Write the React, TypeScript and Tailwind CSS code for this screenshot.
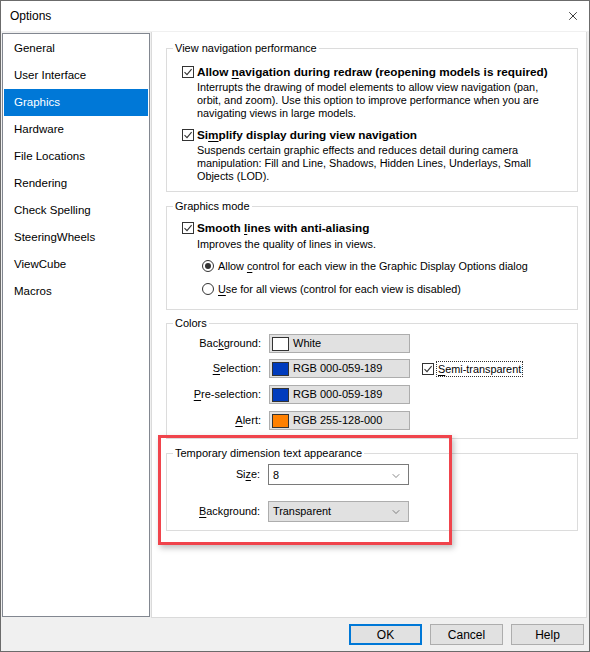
import React from 'react';
import { X, ChevronDown } from 'lucide-react';

const font = { fontFamily: '"Liberation Sans", Arial, sans-serif' };

const navItems = [
  'General',
  'User Interface',
  'Graphics',
  'Hardware',
  'File Locations',
  'Rendering',
  'Check Spelling',
  'SteeringWheels',
  'ViewCube',
  'Macros',
];

// label with an underlined access-key letter
function Mn({ pre, key_, post }: { pre: string; key_: string; post: string }) {
  return (
    <>
      {pre}
      <span className="underline underline-offset-2">{key_}</span>
      {post}
    </>
  );
}

function CheckBox() {
  return (
    <span className="w-[12px] h-[12px] border border-[#333] bg-white flex items-center justify-center shrink-0">
      <svg width="10" height="10" viewBox="0 0 10 10">
        <path d="M1.5 5.2 L4 7.6 L8.6 2.2" fill="none" stroke="#333" strokeWidth="1.1" />
      </svg>
    </span>
  );
}

function Radio({ on }: { on?: boolean }) {
  return (
    <span className="w-[12px] h-[12px] rounded-full border border-[#333] bg-white flex items-center justify-center shrink-0">
      {on && <span className="w-[6px] h-[6px] rounded-full bg-[#333]" />}
    </span>
  );
}

function Group({ title, className, children }: { title: string; className?: string; children: React.ReactNode }) {
  return (
    <div className={`relative w-[412px] border border-[#dcdcdc] ${className ?? ''}`}>
      <span className="absolute -top-[8px] left-[6px] bg-white px-[2px] text-[11px] leading-[14px] text-black">
        {title}
      </span>
      {children}
    </div>
  );
}

function ColorField({ label, swatch, value }: { label: React.ReactNode; swatch: string; value: string }) {
  return (
    <div className="flex items-center h-[19px]">
      <div className="w-[94px] text-right pr-[8px] text-[11px]">{label}</div>
      <div className="w-[141px] h-[19px] bg-[#e1e1e1] border border-[#adadad] flex items-center pl-[2px]">
        <span className="w-[17px] h-[14px] border border-[#333]" style={{ backgroundColor: swatch }} />
        <span className="ml-[4px] text-[11px]">{value}</span>
      </div>
    </div>
  );
}

export default function App() {
  return (
    <div style={font} className="w-[590px] h-[652px] border border-[#6b6b6b] bg-[#f0f0f0] flex flex-col text-black overflow-hidden relative">
      {/* Title bar */}
      <div className="h-[30px] bg-white flex items-center justify-between pl-[9px] pr-[9px] shrink-0">
        <span className="text-[12px]">Options</span>
        <X className="w-[14px] h-[14px] text-black" strokeWidth={1.3} />
      </div>

      {/* Body */}
      <div className="flex flex-1 pt-[1px] pl-[1px] pr-[1px]">
        {/* Category list */}
        <div className="w-[148px] h-[584px] border border-[#828790] bg-white p-[1px] mt-[1px]">
          {navItems.map((item) => (
            <div
              key={item}
              className={`h-[27px] flex items-center pl-[10px] text-[11.5px] ${
                item === 'Graphics' ? 'bg-[#0078d7] text-white' : 'text-black'
              }`}
            >
              {item}
            </div>
          ))}
        </div>

        {/* Settings panel */}
        <div className="ml-[1px] w-[436px] h-[586px] border border-[#dadada] border-t-0 bg-white pl-[14px] pt-[16px] text-[10.85px]">
          <Group title="View navigation performance" className="pt-[15px] pb-[8px] pl-[15px]">
            <div className="flex items-center h-[16px] gap-[3px]">
              <CheckBox />
              <span className="font-bold text-[11.75px]">
                <Mn pre="Allow " key_="n" post="avigation during redraw (reopening models is required)" />
              </span>
            </div>
            <div className="pl-[15px] mt-[1px] leading-[13px]">
              Interrupts the drawing of model elements to allow view navigation (pan,
              <br />
              orbit, and zoom). Use this option to improve performance when you are
              <br />
              navigating views in large models.
            </div>
            <div className="flex items-center h-[16px] gap-[3px] mt-[7px]">
              <CheckBox />
              <span className="font-bold text-[11.75px]">
                <Mn pre="Si" key_="m" post="plify display during view navigation" />
              </span>
            </div>
            <div className="pl-[15px] mt-[1px] leading-[13px]">
              Suspends certain graphic effects and reduces detail during camera
              <br />
              manipulation: Fill and Line, Shadows, Hidden Lines, Underlays, Small
              <br />
              Objects (LOD).
            </div>
          </Group>

          <Group title="Graphics mode" className="mt-[14px] pt-[13px] pb-[12px] pl-[15px]">
            <div className="flex items-center h-[16px] gap-[3px]">
              <CheckBox />
              <span className="font-bold text-[11.75px]">
                <Mn pre="Smooth " key_="l" post="ines with anti-aliasing" />
              </span>
            </div>
            <div className="pl-[15px] mt-[2px] leading-[13px]">Improves the quality of lines in views.</div>
            <div className="flex items-center h-[16px] gap-[4px] mt-[7px] pl-[20px]">
              <Radio on />
              <span>
                <Mn pre="Allow " key_="c" post="ontrol for each view in the Graphic Display Options dialog" />
              </span>
            </div>
            <div className="flex items-center h-[16px] gap-[4px] mt-[7px] pl-[20px]">
              <Radio />
              <span>
                <Mn pre="" key_="U" post="se for all views (control for each view is disabled)" />
              </span>
            </div>
          </Group>

          <Group title="Colors" className="mt-[13px] pt-[10px] pb-[8px] pl-[8px]">
            <div className="flex flex-col">
              <ColorField label={<Mn pre="Bac" key_="k" post="ground:" />} swatch="#ffffff" value="White" />
              <div className="flex items-center mt-[6px]">
                <ColorField label={<Mn pre="" key_="S" post="election:" />} swatch="#003bbd" value="RGB 000-059-189" />
                <div className="ml-[12px] flex items-center">
                  <CheckBox />
                  <span className="ml-[2px] px-[1px] border border-dotted border-[#333] leading-[14px]">
                    <Mn pre="" key_="S" post="emi-transparent" />
                  </span>
                </div>
              </div>
              <div className="mt-[7px]">
                <ColorField label={<Mn pre="" key_="P" post="re-selection:" />} swatch="#003bbd" value="RGB 000-059-189" />
              </div>
              <div className="mt-[7px]">
                <ColorField label={<Mn pre="" key_="A" post="lert:" />} swatch="#ff8000" value="RGB 255-128-000" />
              </div>
            </div>
          </Group>

          <Group title="Temporary dimension text appearance" className="mt-[14px] pt-[10px] pb-[8px] pl-[8px]">
            <div className="flex items-center">
              <div className="w-[93px] text-right pr-[8px]">
                <Mn pre="Si" key_="z" post="e:" />
              </div>
              <div className="w-[141px] h-[21px] bg-white border border-[#7a7a7a] flex items-start justify-between pl-[4px] pr-[6px] pt-[2px]">
                <span>8</span>
                <ChevronDown className="w-[12px] h-[12px] text-[#555] mt-[3px]" strokeWidth={1.4} />
              </div>
            </div>
            <div className="flex items-center mt-[16px]">
              <div className="w-[93px] text-right pr-[8px]">
                <Mn pre="" key_="B" post="ackground:" />
              </div>
              <div className="w-[141px] h-[21px] bg-[#e1e1e1] border border-[#adadad] flex items-center justify-between pl-[4px] pr-[6px]">
                <span>Transparent</span>
                <ChevronDown className="w-[12px] h-[12px] text-[#555]" strokeWidth={1.4} />
              </div>
            </div>
          </Group>
        </div>
      </div>

      {/* Buttons */}
      <div className="h-[35px] shrink-0 flex items-center justify-end gap-[8px] pr-[5px] pb-[2px]">
        <button className="w-[73px] h-[21px] bg-[#e1e1e1] border-2 border-[#0078d7] text-[12px]">OK</button>
        <button className="w-[73px] h-[21px] bg-[#e1e1e1] border border-[#adadad] text-[12px]">Cancel</button>
        <button className="w-[73px] h-[21px] bg-[#e1e1e1] border border-[#adadad] text-[12px]">Help</button>
      </div>

      {/* Highlight annotation */}
      <div className="absolute left-[157px] top-[434px] w-[294px] h-[110px] border-[3px] border-[#f0444c] shadow-[2px_3px_6px_rgba(0,0,0,0.25)] pointer-events-none" />
    </div>
  );
}
